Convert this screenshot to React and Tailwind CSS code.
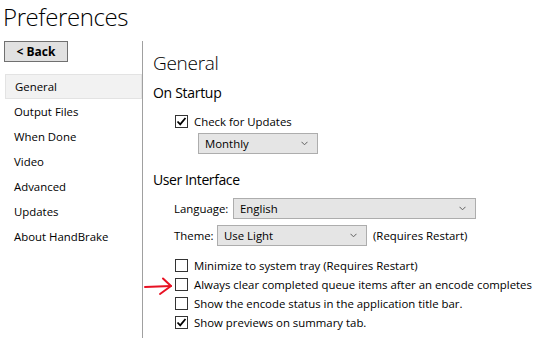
import React from 'react';

const font = { fontFamily: '"Open Sans", "Noto Sans", sans-serif' };

const Chevron = () => (
  <svg width="7" height="5" viewBox="0 0 7 5" className="shrink-0">
    <path d="M0.5 0.8 L3.5 3.8 L6.5 0.8" fill="none" stroke="#606060" strokeWidth="1" />
  </svg>
);

const Select = ({ value, className }) => (
  <div className={`flex items-center justify-between h-[21px] border border-[#adadad] bg-[#e5e5e5] pl-[6px] pr-[9px] text-black ${className}`}>
    <span>{value}</span>
    <Chevron />
  </div>
);

const Checkbox = ({ checked }) => (
  <div className="w-[13px] h-[13px] border border-[#333] bg-white flex items-center justify-center shrink-0">
    {checked && (
      <svg width="11" height="11" viewBox="0 0 11 11">
        <path d="M1.5 5.5 L4.2 8.3 L9.5 2" fill="none" stroke="#000" strokeWidth="1.8" />
      </svg>
    )}
  </div>
);

const CheckRow = ({ checked, label, className = '' }) => (
  <div className={`flex items-center gap-[6px] h-[19px] pl-[22px] text-black ${className}`}>
    <Checkbox checked={checked} />
    <span className="whitespace-nowrap">{label}</span>
  </div>
);

const navItems = ['General', 'Output Files', 'When Done', 'Video', 'Advanced', 'Updates', 'About HandBrake'];

export default function App() {
  return (
    <div className="w-[544px] h-[338px] bg-white overflow-hidden text-black text-[11.4px]" style={font}>
      <div className="h-[41px] pl-[3px] text-[24px] leading-[34px] font-light tracking-[-0.4px]">Preferences</div>
      <div className="flex h-[297px]">
        <div className="w-[143px] shrink-0 border-r border-[#a0a0a0] pl-[4px]">
          <button className="block w-[64px] h-[21px] border border-[#707070] bg-[#e1e1e1] text-[12px] font-bold leading-none">&lt; Back</button>
          <ul className="mt-[12px] ml-[1px]">
            {navItems.map((item, i) => (
              <li
                key={item}
                className={`h-[25px] flex items-center pl-[9px] ${i === 0 ? 'bg-[#f2f2f2] border border-[#e3e3e3]' : ''}`}
              >
                {item}
              </li>
            ))}
          </ul>
        </div>
        <div className="relative flex-1 min-w-0 pl-[10px] pt-[10px]">
          <div className="h-[24px] text-[19px] leading-[24px] font-light tracking-[-0.3px]">General</div>
          <div className="mt-[8px] h-[20px] text-[14px] leading-[20px] tracking-[-0.3px]">On Startup</div>
          <CheckRow checked label="Check for Updates" className="mt-[9px]" />
          <Select value="Monthly" className="mt-[2px] ml-[45px] w-[120px]" />
          <div className="mt-[16px] h-[20px] text-[14px] leading-[20px] tracking-[-0.4px]">User Interface</div>
          <div className="mt-[8px] flex items-center pl-[21px] h-[21px]">
            <span className="w-[59px]">Language:</span>
            <Select value="English" className="w-[243px]" />
          </div>
          <div className="mt-[6px] flex items-center pl-[21px] h-[21px]">
            <span className="w-[43px]">Theme:</span>
            <Select value="Use Light" className="w-[150px]" />
            <span className="ml-[6px]">(Requires Restart)</span>
          </div>
          <div className="mt-[10px]">
            <CheckRow label="Minimize to system tray (Requires Restart)" />
            <CheckRow label="Always clear completed queue items after an encode completes" />
            <CheckRow label="Show the encode status in the application title bar." />
            <CheckRow checked label="Show previews on summary tab." />
          </div>
          <svg className="absolute left-[1px] top-[236px]" width="30" height="20" viewBox="0 0 30 20">
            <path d="M1 10 L27 9" fill="none" stroke="#e81123" strokeWidth="2" strokeLinecap="round" />
            <path d="M19 1.5 L27 9 L16 17" fill="none" stroke="#e81123" strokeWidth="2" strokeLinecap="round" strokeLinejoin="round" />
          </svg>
        </div>
      </div>
    </div>
  );
}
